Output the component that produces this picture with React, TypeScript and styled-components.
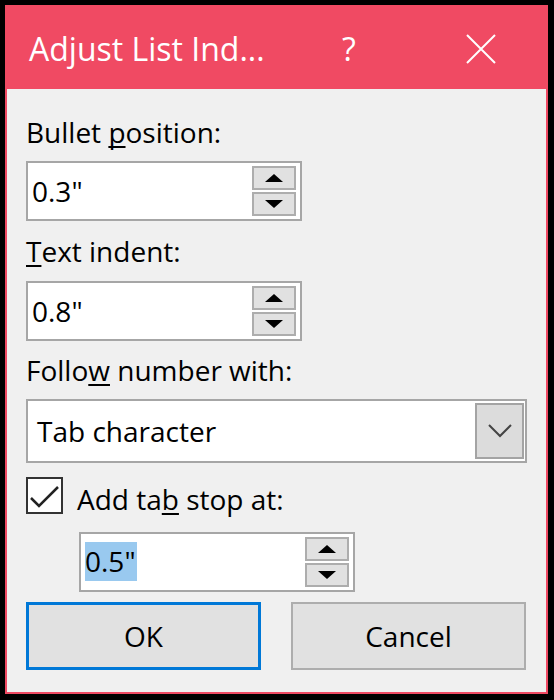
import React from "react";
import styled, { createGlobalStyle } from "styled-components";

const GlobalStyle = createGlobalStyle`
  html, body {
    margin: 0;
    padding: 0;
    background: #000;
  }
  body {
    font-family: "Open Sans", "Noto Sans", sans-serif;
  }
`;

const Frame = styled.div`
  width: 554px;
  height: 700px;
  box-sizing: border-box;
  padding: 5px 6px 6px 5px;
  background: #000;
`;

const Window = styled.div`
  width: 543px;
  height: 689px;
  box-sizing: border-box;
  display: flex;
  flex-direction: column;
  background: #f0f0f0;
  border: 2px solid #f04a63;
  border-top: none;
`;

const TitleBar = styled.div`
  height: 84px;
  flex: none;
  display: flex;
  align-items: center;
  background: #f04a63;
  color: #fff;
  padding: 4px 33px 0 22px;
  box-sizing: border-box;
`;

const TitleText = styled.div`
  flex: 1;
  font-size: 32px;
  line-height: 1;
  white-space: nowrap;
`;

const TitleButton = styled.div<{ $gap?: number }>`
  width: 64px;
  height: 40px;
  display: flex;
  align-items: center;
  justify-content: center;
  font-size: 32px;
  line-height: 1;
  margin-right: ${p => p.$gap || 0}px;
`;

const Body = styled.div`
  flex: 1;
  display: flex;
  flex-direction: column;
  padding: 25px 19px 0 19px;
`;

const Label = styled.div<{ $top?: number }>`
  font-size: 28px;
  line-height: 36px;
  height: 36px;
  color: #000;
  margin-top: ${p => p.$top || 0}px;
  white-space: nowrap;
  u {
    text-underline-offset: 3px;
    text-decoration-thickness: 2px;
    text-decoration-skip-ink: none;
  }
`;

const SpinBox = styled.div<{ $top: number; $left?: number }>`
  width: 276px;
  height: 60px;
  box-sizing: border-box;
  margin-top: ${p => p.$top}px;
  margin-left: ${p => p.$left || 0}px;
  background: #fff;
  border: 2px solid #a6a6a6;
  display: flex;
  align-items: center;
`;

const Value = styled.div`
  flex: 1;
  padding-left: 4px;
  font-size: 28px;
  line-height: 36px;
  color: #000;
`;

const Selected = styled.span`
  display: inline-block;
  height: 39px;
  line-height: 39px;
  margin-top: -5px;
  padding-right: 1px;
  background: #99c9ef;
`;

const Spinner = styled.div`
  display: flex;
  flex-direction: column;
  gap: 2px;
  margin-right: 4px;
`;

const SpinButton = styled.div`
  width: 44px;
  height: 24px;
  box-sizing: border-box;
  background: #e1e1e1;
  border: 2px solid #adadad;
  display: flex;
  align-items: center;
  justify-content: center;
`;

const Arrow = styled.div<{ $down?: boolean }>`
  width: 0;
  height: 0;
  border-left: 9px solid transparent;
  border-right: 9px solid transparent;
  ${p =>
    p.$down
      ? "border-top: 8px solid #000;"
      : "border-bottom: 8px solid #000;"}
`;

const Select = styled.div`
  height: 64px;
  margin-top: 11px;
  box-sizing: border-box;
  background: #fff;
  border: 2px solid #a6a6a6;
  display: flex;
  align-items: center;
  padding: 0 1px 0 9px;
`;

const SelectValue = styled.div`
  flex: 1;
  font-size: 28px;
  line-height: 36px;
  color: #000;
`;

const DropButton = styled.div`
  width: 49px;
  height: 56px;
  box-sizing: border-box;
  background: #dcdcdc;
  border: 2px solid #a4a4a4;
  display: flex;
  align-items: center;
  justify-content: center;
`;

const CheckRow = styled.div`
  margin-top: 14px;
  height: 37px;
  display: flex;
  align-items: flex-start;
  gap: 14px;
`;

const CheckBox = styled.div`
  width: 37px;
  height: 37px;
  box-sizing: border-box;
  border: 2px solid #333;
  background: #fff;
  display: flex;
  align-items: center;
  justify-content: center;
`;

const CheckLabel = styled(Label)`
  padding-top: 4px;
`;

const ButtonRow = styled.div`
  margin-top: 10px;
  display: flex;
  gap: 30px;
`;

const Button = styled.div<{ $primary?: boolean }>`
  width: 235px;
  height: 68px;
  box-sizing: border-box;
  background: #e1e1e1;
  border: ${p => (p.$primary ? "3px solid #0078d7" : "2px solid #adadad")};
  display: flex;
  align-items: center;
  justify-content: center;
  font-size: 28px;
  color: #000;
`;

const Spin = ({ value, top, left, selected }: { value: string; top: number; left?: number; selected?: boolean }) => (
  <SpinBox $top={top} $left={left}>
    <Value>{selected ? <Selected>{value}</Selected> : value}</Value>
    <Spinner>
      <SpinButton>
        <Arrow />
      </SpinButton>
      <SpinButton>
        <Arrow $down />
      </SpinButton>
    </Spinner>
  </SpinBox>
);

const App = () => {
  return (
    <Frame>
      <GlobalStyle />
      <Window>
        <TitleBar>
          <TitleText>Adjust List Ind...</TitleText>
          <TitleButton $gap={68}>?</TitleButton>
          <TitleButton>
            <svg width="30" height="30" viewBox="0 0 30 30">
              <path d="M1 1 L29 29 M29 1 L1 29" stroke="#fff" strokeWidth="2" fill="none" />
            </svg>
          </TitleButton>
        </TitleBar>
        <Body>
          <Label>
            Bullet <u>p</u>osition:
          </Label>
          <Spin value={'0.3"'} top={11} />
          <Label $top={12}>
            <u>T</u>ext indent:
          </Label>
          <Spin value={'0.8"'} top={12} />
          <Label $top={11}>
            Follo<u>w</u> number with:
          </Label>
          <Select>
            <SelectValue>Tab character</SelectValue>
            <DropButton>
              <svg width="24" height="14" viewBox="0 0 24 14">
                <polyline points="1,1 12,12 23,1" stroke="#444" strokeWidth="2" fill="none" />
              </svg>
            </DropButton>
          </Select>
          <CheckRow>
            <CheckBox>
              <svg width="33" height="33" viewBox="0 0 33 33">
                <polyline points="3,19 11,27 30,8" stroke="#222" strokeWidth="2.5" fill="none" />
              </svg>
            </CheckBox>
            <CheckLabel>
              Add ta<u>b</u> stop at:
            </CheckLabel>
          </CheckRow>
          <Spin value={'0.5"'} top={18} left={53} selected />
          <ButtonRow>
            <Button $primary>OK</Button>
            <Button>Cancel</Button>
          </ButtonRow>
        </Body>
      </Window>
    </Frame>
  );
};

export default App;
